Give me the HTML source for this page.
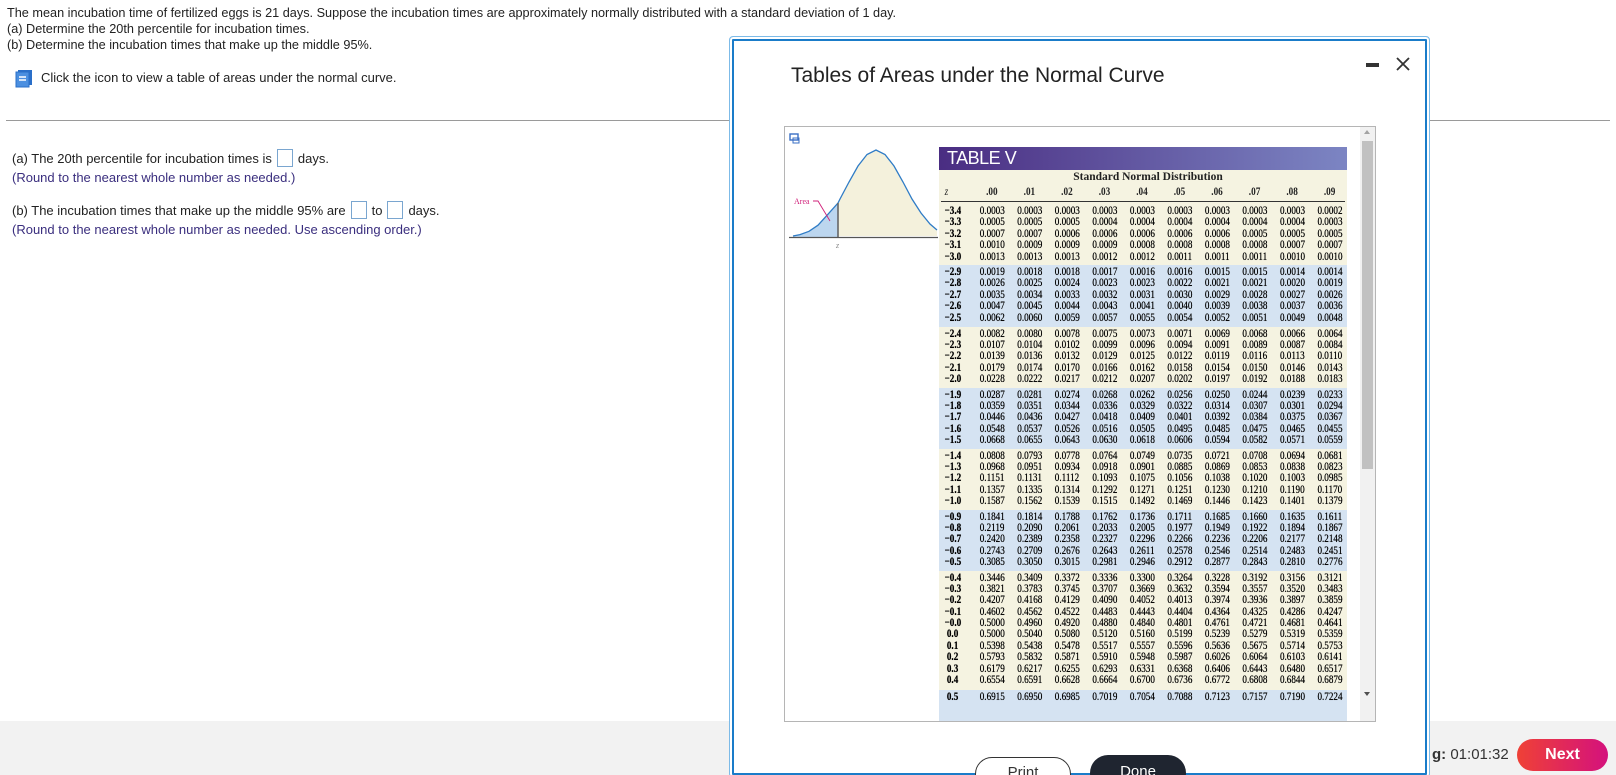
<!DOCTYPE html>
<html style="overflow:hidden;width:1616px;height:775px"><head><meta charset="utf-8"><style>
*{margin:0;padding:0;box-sizing:border-box}
html,body{overflow:hidden}
body{width:1616px;height:775px;overflow:hidden;background:#fff;position:relative;font-family:"Liberation Sans",Arial,sans-serif;color:#222}
.a{position:absolute;white-space:nowrap}
.t{font-size:12.7px;line-height:16px}
.u{font-size:13px;line-height:18px}
.box{display:inline-block;vertical-align:middle;width:16px;height:18px;border:1px solid #7aa6d0;background:#fff;margin:-3px 5px 0 5px}
.rd{color:#3a2e7e}
.modal{position:absolute;left:729px;top:36px;width:701px;height:742px;background:#fff;border:1px solid #7dbbe8;box-shadow:inset 0 0 0 2px #fff,inset 0 0 0 4px #1a7cc9;border-radius:4px}
.g{position:absolute;left:939px;width:408px;padding-top:2px}
.r{height:11.4px;line-height:11.4px;font-family:"Liberation Serif","Times New Roman",serif;font-size:11.4px;color:#000;transform:scaleX(.8);transform-origin:0 50%;display:flex;width:520px;text-shadow:0 0 .4px #000}
.r b{width:51px;padding-left:7px;font-weight:bold}
.r span{width:47px}
.y{background:#f5f3e1}.bl{background:#d5e3f2}
</style></head><body>
<div class="a t" style="left:7px;top:5px">The mean incubation time of fertilized eggs is 21 days. Suppose the incubation times are approximately normally distributed with a standard deviation of 1 day.</div>
<div class="a t" style="left:7px;top:21px">(a) Determine the 20th percentile for incubation times.</div>
<div class="a t" style="left:7px;top:37px">(b) Determine the incubation times that make up the middle 95%.</div>
<svg class="a" style="left:13px;top:68px" width="22" height="22" viewBox="0 0 22 22"><path d="M5 2h14v15H5z" fill="#2a6fc9"/><path d="M3 4h13v15H3z" fill="#4b8fe0" stroke="#2a6fc9"/><path d="M6 9h7M6 12h7" stroke="#fff" stroke-width="1.6"/></svg>
<div class="a u" style="left:41px;top:69px">Click the icon to view a table of areas under the normal curve.</div>
<div class="a" style="left:6px;top:120px;width:1604px;height:1px;background:#9a9a9a"></div>
<div class="a u" style="left:12px;top:150px">(a) The 20th percentile for incubation times is<span class="box"></span>days.</div>
<div class="a u rd" style="left:12px;top:169px">(Round to the nearest whole number as needed.)</div>
<div class="a u" style="left:12px;top:202px">(b) The incubation times that make up the middle 95% are<span class="box"></span>to<span class="box"></span>days.</div>
<div class="a u rd" style="left:12px;top:221px">(Round to the nearest whole number as needed. Use ascending order.)</div>

<div class="a" style="left:0;top:721px;width:1616px;height:54px;background:#f2f2f2"></div>
<div class="a" style="left:1432px;top:746px;font-size:15px;color:#333"><b>g:</b> 01:01:32</div>
<div class="a" style="left:1517px;top:739px;width:91px;height:32px;border-radius:16px;background:linear-gradient(90deg,#ef4136,#d4117d);color:#fff;font-weight:bold;font-size:16px;line-height:32px;text-align:center">Next</div>

<div class="modal"></div>
<div class="a" style="left:791px;top:64px;font-size:21px;color:#222">Tables of Areas under the Normal Curve</div>
<div class="a" style="left:1366px;top:63px;width:13px;height:4px;background:#333"></div>
<svg class="a" style="left:1395px;top:56px" width="16" height="16"><path d="M2 2L14 14M14 2L2 14" stroke="#333" stroke-width="1.8"/></svg>

<div class="a" style="left:784px;top:126px;width:592px;height:596px;border:1px solid #b5b5b5"></div>
<div class="a" style="left:785px;top:127px;width:575px;height:594px;overflow:hidden">
<div style="position:absolute;left:-785px;top:-127px;width:1616px;height:775px">
<svg class="a" style="left:789px;top:133px" width="12" height="12"><rect x="1" y="1" width="8" height="6" fill="none" stroke="#3a6fc4" stroke-width="1.4"/><rect x="4" y="5" width="6" height="5" fill="none" stroke="#3a6fc4" stroke-width="1"/></svg>
<svg class="a" style="left:780px;top:140px" width="160" height="110" viewBox="780 140 160 110">
<path d="M793 236L800 234.6L809 231.3L818 225.2L827 215.3L838 203L840 199L849 182L858 166L867 154.5L876 150L885 154.5L894 166L903 182L912 199L921 213L930 224L937 230L937 236Z" fill="#f4f1dc"/>
<path d="M793 236L800 234.6L809 231.3L818 225.2L827 215.3L838 203L838 237L793 237Z" fill="#bcd6ef"/>
<path d="M793 236L800 234.6L809 231.3L818 225.2L827 215.3L838 203L840 199L849 182L858 166L867 154.5L876 150L885 154.5L894 166L903 182L912 199L921 213L930 224L937 230" fill="none" stroke="#2f7cc6" stroke-width="1.3"/>
<line x1="838" y1="203" x2="838" y2="237" stroke="#666" stroke-width="1.6"/>
<line x1="789" y1="237.5" x2="938" y2="237.5" stroke="#555" stroke-width="1.2"/>
<text x="794" y="204" font-family="Liberation Serif" font-size="8" fill="#d0207a">Area</text>
<path d="M813 201h5l12 20" stroke="#d0207a" fill="none" stroke-width=".9"/>
<text x="836" y="248" font-family="Liberation Serif" font-size="8" fill="#888" font-style="italic">z</text>
</svg>
<div class="a" style="left:939px;top:147px;width:408px;height:23px;background:linear-gradient(90deg,#4a2d82,#7c85c3);color:#fff;font-family:'Liberation Sans',sans-serif;font-size:18px;line-height:23px;padding-left:8px;letter-spacing:-.5px">TABLE V</div>
<div class="a y" style="left:939px;top:170px;width:408px;height:35px"></div>
<div class="a" style="left:939px;top:171px;width:408px;text-align:center;font-family:'Liberation Serif',serif;font-weight:bold;font-size:11.5px;padding-left:10px">Standard Normal Distribution</div>
<div class="a" style="left:939px;top:186px;width:520px;transform:scaleX(.8);transform-origin:0 0;display:flex;font-family:'Liberation Serif',serif;font-weight:bold;font-size:11.5px">
<i style="width:51px;padding-left:7px;font-weight:normal">z</i><span style="width:47px;padding-left:8px">.00</span><span style="width:47px;padding-left:8px">.01</span><span style="width:47px;padding-left:8px">.02</span><span style="width:47px;padding-left:8px">.03</span><span style="width:47px;padding-left:8px">.04</span><span style="width:47px;padding-left:8px">.05</span><span style="width:47px;padding-left:8px">.06</span><span style="width:47px;padding-left:8px">.07</span><span style="width:47px;padding-left:8px">.08</span><span style="width:47px;padding-left:8px">.09</span></div>
<div class="a" style="left:941px;top:201px;width:404px;height:1px;background:#333"></div>

<div class="g y" style="top:204px;height:61px">
<div class="r"><b>−3.4</b><span>0.0003</span><span>0.0003</span><span>0.0003</span><span>0.0003</span><span>0.0003</span><span>0.0003</span><span>0.0003</span><span>0.0003</span><span>0.0003</span><span>0.0002</span></div>
<div class="r"><b>−3.3</b><span>0.0005</span><span>0.0005</span><span>0.0005</span><span>0.0004</span><span>0.0004</span><span>0.0004</span><span>0.0004</span><span>0.0004</span><span>0.0004</span><span>0.0003</span></div>
<div class="r"><b>−3.2</b><span>0.0007</span><span>0.0007</span><span>0.0006</span><span>0.0006</span><span>0.0006</span><span>0.0006</span><span>0.0006</span><span>0.0005</span><span>0.0005</span><span>0.0005</span></div>
<div class="r"><b>−3.1</b><span>0.0010</span><span>0.0009</span><span>0.0009</span><span>0.0009</span><span>0.0008</span><span>0.0008</span><span>0.0008</span><span>0.0008</span><span>0.0007</span><span>0.0007</span></div>
<div class="r"><b>−3.0</b><span>0.0013</span><span>0.0013</span><span>0.0013</span><span>0.0012</span><span>0.0012</span><span>0.0011</span><span>0.0011</span><span>0.0011</span><span>0.0010</span><span>0.0010</span></div>
</div>
<div class="g bl" style="top:265px;height:61.5px">
<div class="r"><b>−2.9</b><span>0.0019</span><span>0.0018</span><span>0.0018</span><span>0.0017</span><span>0.0016</span><span>0.0016</span><span>0.0015</span><span>0.0015</span><span>0.0014</span><span>0.0014</span></div>
<div class="r"><b>−2.8</b><span>0.0026</span><span>0.0025</span><span>0.0024</span><span>0.0023</span><span>0.0023</span><span>0.0022</span><span>0.0021</span><span>0.0021</span><span>0.0020</span><span>0.0019</span></div>
<div class="r"><b>−2.7</b><span>0.0035</span><span>0.0034</span><span>0.0033</span><span>0.0032</span><span>0.0031</span><span>0.0030</span><span>0.0029</span><span>0.0028</span><span>0.0027</span><span>0.0026</span></div>
<div class="r"><b>−2.6</b><span>0.0047</span><span>0.0045</span><span>0.0044</span><span>0.0043</span><span>0.0041</span><span>0.0040</span><span>0.0039</span><span>0.0038</span><span>0.0037</span><span>0.0036</span></div>
<div class="r"><b>−2.5</b><span>0.0062</span><span>0.0060</span><span>0.0059</span><span>0.0057</span><span>0.0055</span><span>0.0054</span><span>0.0052</span><span>0.0051</span><span>0.0049</span><span>0.0048</span></div>
</div>
<div class="g y" style="top:326.5px;height:61px">
<div class="r"><b>−2.4</b><span>0.0082</span><span>0.0080</span><span>0.0078</span><span>0.0075</span><span>0.0073</span><span>0.0071</span><span>0.0069</span><span>0.0068</span><span>0.0066</span><span>0.0064</span></div>
<div class="r"><b>−2.3</b><span>0.0107</span><span>0.0104</span><span>0.0102</span><span>0.0099</span><span>0.0096</span><span>0.0094</span><span>0.0091</span><span>0.0089</span><span>0.0087</span><span>0.0084</span></div>
<div class="r"><b>−2.2</b><span>0.0139</span><span>0.0136</span><span>0.0132</span><span>0.0129</span><span>0.0125</span><span>0.0122</span><span>0.0119</span><span>0.0116</span><span>0.0113</span><span>0.0110</span></div>
<div class="r"><b>−2.1</b><span>0.0179</span><span>0.0174</span><span>0.0170</span><span>0.0166</span><span>0.0162</span><span>0.0158</span><span>0.0154</span><span>0.0150</span><span>0.0146</span><span>0.0143</span></div>
<div class="r"><b>−2.0</b><span>0.0228</span><span>0.0222</span><span>0.0217</span><span>0.0212</span><span>0.0207</span><span>0.0202</span><span>0.0197</span><span>0.0192</span><span>0.0188</span><span>0.0183</span></div>
</div>
<div class="g bl" style="top:387.5px;height:61px">
<div class="r"><b>−1.9</b><span>0.0287</span><span>0.0281</span><span>0.0274</span><span>0.0268</span><span>0.0262</span><span>0.0256</span><span>0.0250</span><span>0.0244</span><span>0.0239</span><span>0.0233</span></div>
<div class="r"><b>−1.8</b><span>0.0359</span><span>0.0351</span><span>0.0344</span><span>0.0336</span><span>0.0329</span><span>0.0322</span><span>0.0314</span><span>0.0307</span><span>0.0301</span><span>0.0294</span></div>
<div class="r"><b>−1.7</b><span>0.0446</span><span>0.0436</span><span>0.0427</span><span>0.0418</span><span>0.0409</span><span>0.0401</span><span>0.0392</span><span>0.0384</span><span>0.0375</span><span>0.0367</span></div>
<div class="r"><b>−1.6</b><span>0.0548</span><span>0.0537</span><span>0.0526</span><span>0.0516</span><span>0.0505</span><span>0.0495</span><span>0.0485</span><span>0.0475</span><span>0.0465</span><span>0.0455</span></div>
<div class="r"><b>−1.5</b><span>0.0668</span><span>0.0655</span><span>0.0643</span><span>0.0630</span><span>0.0618</span><span>0.0606</span><span>0.0594</span><span>0.0582</span><span>0.0571</span><span>0.0559</span></div>
</div>
<div class="g y" style="top:448.5px;height:61px">
<div class="r"><b>−1.4</b><span>0.0808</span><span>0.0793</span><span>0.0778</span><span>0.0764</span><span>0.0749</span><span>0.0735</span><span>0.0721</span><span>0.0708</span><span>0.0694</span><span>0.0681</span></div>
<div class="r"><b>−1.3</b><span>0.0968</span><span>0.0951</span><span>0.0934</span><span>0.0918</span><span>0.0901</span><span>0.0885</span><span>0.0869</span><span>0.0853</span><span>0.0838</span><span>0.0823</span></div>
<div class="r"><b>−1.2</b><span>0.1151</span><span>0.1131</span><span>0.1112</span><span>0.1093</span><span>0.1075</span><span>0.1056</span><span>0.1038</span><span>0.1020</span><span>0.1003</span><span>0.0985</span></div>
<div class="r"><b>−1.1</b><span>0.1357</span><span>0.1335</span><span>0.1314</span><span>0.1292</span><span>0.1271</span><span>0.1251</span><span>0.1230</span><span>0.1210</span><span>0.1190</span><span>0.1170</span></div>
<div class="r"><b>−1.0</b><span>0.1587</span><span>0.1562</span><span>0.1539</span><span>0.1515</span><span>0.1492</span><span>0.1469</span><span>0.1446</span><span>0.1423</span><span>0.1401</span><span>0.1379</span></div>
</div>
<div class="g bl" style="top:509.5px;height:61px">
<div class="r"><b>−0.9</b><span>0.1841</span><span>0.1814</span><span>0.1788</span><span>0.1762</span><span>0.1736</span><span>0.1711</span><span>0.1685</span><span>0.1660</span><span>0.1635</span><span>0.1611</span></div>
<div class="r"><b>−0.8</b><span>0.2119</span><span>0.2090</span><span>0.2061</span><span>0.2033</span><span>0.2005</span><span>0.1977</span><span>0.1949</span><span>0.1922</span><span>0.1894</span><span>0.1867</span></div>
<div class="r"><b>−0.7</b><span>0.2420</span><span>0.2389</span><span>0.2358</span><span>0.2327</span><span>0.2296</span><span>0.2266</span><span>0.2236</span><span>0.2206</span><span>0.2177</span><span>0.2148</span></div>
<div class="r"><b>−0.6</b><span>0.2743</span><span>0.2709</span><span>0.2676</span><span>0.2643</span><span>0.2611</span><span>0.2578</span><span>0.2546</span><span>0.2514</span><span>0.2483</span><span>0.2451</span></div>
<div class="r"><b>−0.5</b><span>0.3085</span><span>0.3050</span><span>0.3015</span><span>0.2981</span><span>0.2946</span><span>0.2912</span><span>0.2877</span><span>0.2843</span><span>0.2810</span><span>0.2776</span></div>
</div>
<div class="g y" style="top:570.5px;height:119px">
<div class="r"><b>−0.4</b><span>0.3446</span><span>0.3409</span><span>0.3372</span><span>0.3336</span><span>0.3300</span><span>0.3264</span><span>0.3228</span><span>0.3192</span><span>0.3156</span><span>0.3121</span></div>
<div class="r"><b>−0.3</b><span>0.3821</span><span>0.3783</span><span>0.3745</span><span>0.3707</span><span>0.3669</span><span>0.3632</span><span>0.3594</span><span>0.3557</span><span>0.3520</span><span>0.3483</span></div>
<div class="r"><b>−0.2</b><span>0.4207</span><span>0.4168</span><span>0.4129</span><span>0.4090</span><span>0.4052</span><span>0.4013</span><span>0.3974</span><span>0.3936</span><span>0.3897</span><span>0.3859</span></div>
<div class="r"><b>−0.1</b><span>0.4602</span><span>0.4562</span><span>0.4522</span><span>0.4483</span><span>0.4443</span><span>0.4404</span><span>0.4364</span><span>0.4325</span><span>0.4286</span><span>0.4247</span></div>
<div class="r"><b>−0.0</b><span>0.5000</span><span>0.4960</span><span>0.4920</span><span>0.4880</span><span>0.4840</span><span>0.4801</span><span>0.4761</span><span>0.4721</span><span>0.4681</span><span>0.4641</span></div>
<div class="r"><b>&nbsp;0.0</b><span>0.5000</span><span>0.5040</span><span>0.5080</span><span>0.5120</span><span>0.5160</span><span>0.5199</span><span>0.5239</span><span>0.5279</span><span>0.5319</span><span>0.5359</span></div>
<div class="r"><b>&nbsp;0.1</b><span>0.5398</span><span>0.5438</span><span>0.5478</span><span>0.5517</span><span>0.5557</span><span>0.5596</span><span>0.5636</span><span>0.5675</span><span>0.5714</span><span>0.5753</span></div>
<div class="r"><b>&nbsp;0.2</b><span>0.5793</span><span>0.5832</span><span>0.5871</span><span>0.5910</span><span>0.5948</span><span>0.5987</span><span>0.6026</span><span>0.6064</span><span>0.6103</span><span>0.6141</span></div>
<div class="r"><b>&nbsp;0.3</b><span>0.6179</span><span>0.6217</span><span>0.6255</span><span>0.6293</span><span>0.6331</span><span>0.6368</span><span>0.6406</span><span>0.6443</span><span>0.6480</span><span>0.6517</span></div>
<div class="r"><b>&nbsp;0.4</b><span>0.6554</span><span>0.6591</span><span>0.6628</span><span>0.6664</span><span>0.6700</span><span>0.6736</span><span>0.6772</span><span>0.6808</span><span>0.6844</span><span>0.6879</span></div>
</div>
<div class="g bl" style="top:689.5px;height:40px">
<div class="r"><b>&nbsp;0.5</b><span>0.6915</span><span>0.6950</span><span>0.6985</span><span>0.7019</span><span>0.7054</span><span>0.7088</span><span>0.7123</span><span>0.7157</span><span>0.7190</span><span>0.7224</span></div>
</div>
</div></div>
<div class="a" style="left:1360px;top:127px;width:15px;height:594px;background:#f1f1f1"></div>
<div class="a" style="left:1362px;top:141px;width:11px;height:328px;background:#c1c1c1"></div>
<div class="a" style="left:1364px;top:130px;border-left:3.5px solid transparent;border-right:3.5px solid transparent;border-bottom:4px solid #a3a3a3"></div>
<div class="a" style="left:1364px;top:692px;border-left:3.5px solid transparent;border-right:3.5px solid transparent;border-top:4px solid #505050"></div>

<div class="a" style="left:975px;top:757px;width:96px;height:18px;overflow:hidden"><div style="width:96px;height:34px;border:1.5px solid #333;border-radius:17px;background:#fff;font-size:15px;text-align:center;line-height:30px;color:#333">Print</div></div>
<div class="a" style="left:1090px;top:755px;width:96px;height:20px;overflow:hidden"><div style="width:96px;height:36px;border-radius:18px;background:#1f2530;font-size:15px;text-align:center;line-height:34px;color:#fff">Done</div></div>
</body></html>
